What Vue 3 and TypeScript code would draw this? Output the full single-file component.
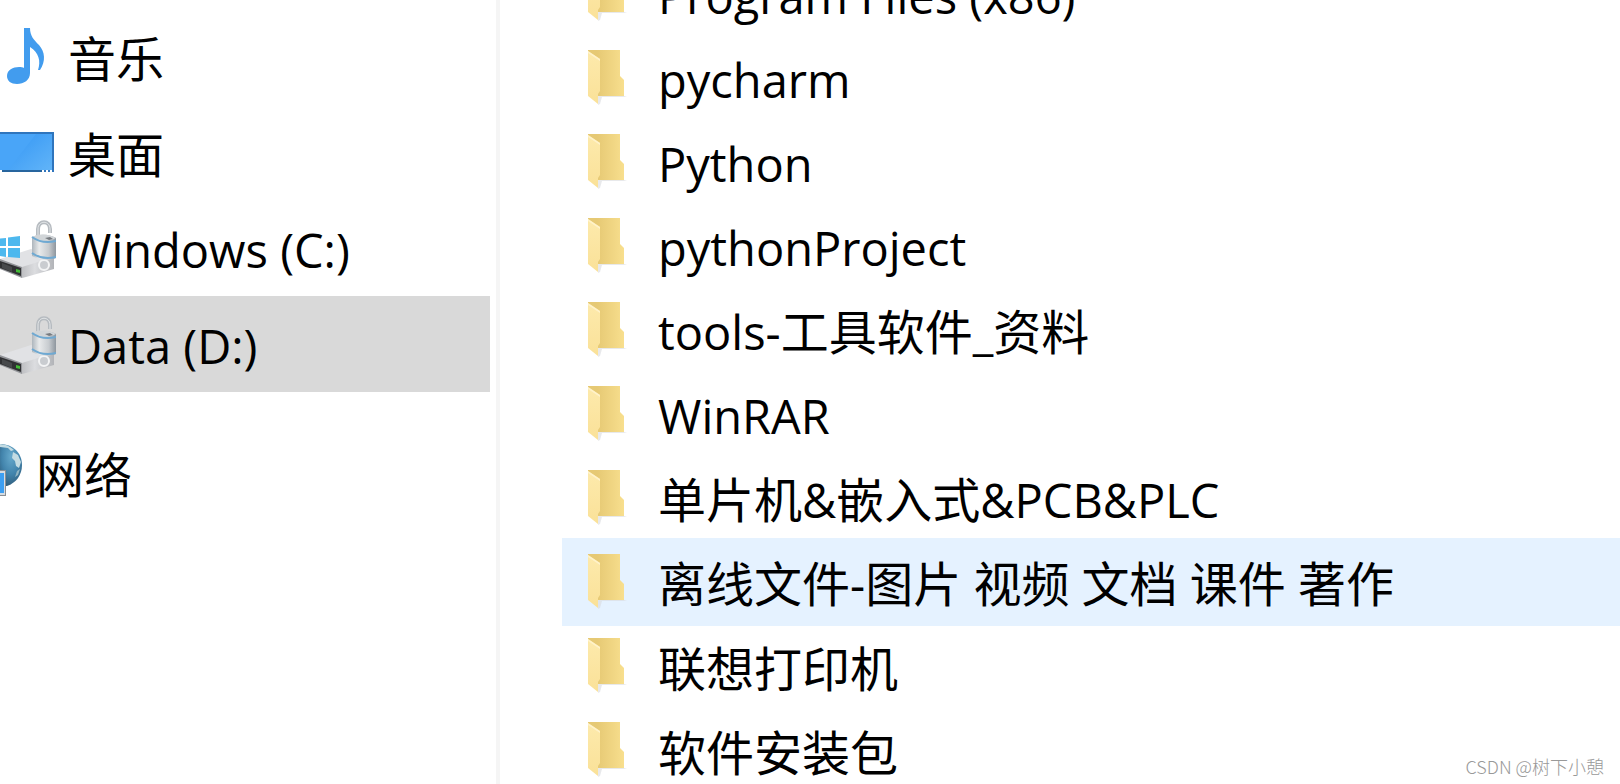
<script setup lang="ts">
type Place = { id: string; label: string; icon: 'music' | 'desktop' | 'drive' | 'network'; system?: boolean; current?: boolean; root?: boolean }
type Folder = { name: string; hovered?: boolean }
type Run = { text: string; latin: boolean }

const places: Place[] = [
  { id: 'music', label: '音乐', icon: 'music' },
  { id: 'desktop', label: '桌面', icon: 'desktop' },
  { id: 'c', label: 'Windows (C:)', icon: 'drive', system: true },
  { id: 'd', label: 'Data (D:)', icon: 'drive', current: true },
  { id: 'network', label: '网络', icon: 'network', root: true },
]

const folders: Folder[] = [
  { name: 'Program Files (x86)' },
  { name: 'pycharm' },
  { name: 'Python' },
  { name: 'pythonProject' },
  { name: 'tools-工具软件_资料' },
  { name: 'WinRAR' },
  { name: '单片机&嵌入式&PCB&PLC' },
  { name: '离线文件-图片 视频 文档 课件 著作', hovered: true },
  { name: '联想打印机' },
  { name: '软件安装包' },
]

// Splits a name into Latin and Chinese runs so that each takes its own type size.
function runs(name: string): Run[] {
  return (name.match(/[\x00-\x7f]+|[^\x00-\x7f]+/g) ?? []).map((text) => ({
    text,
    latin: text.charCodeAt(0) < 128,
  }))
}
</script>

<template>
  <div class="explorer">
    <nav class="sidebar" aria-label="导航窗格">
      <a
        v-for="p in places"
        :key="p.id"
        :href="'#' + p.id"
        class="place"
        :class="{ current: p.current, root: p.root }"
        :aria-current="p.current ? 'page' : undefined"
      >
        <svg v-if="p.icon === 'music'" class="place-icon" viewBox="0 0 56 60" aria-hidden="true">
          <path fill="#429cee" d="M24 2h6c0 8 4 12 9 17 6 7 7 16 1 25h-2c3-9 1-17-8-23v26c0 7-6 11-13 11-6 0-10-3-10-8 0-6 6-9 12-9 2 0 4 0 5 1z" />
        </svg>
        <svg v-else-if="p.icon === 'desktop'" class="place-icon" viewBox="0 0 56 60" aria-hidden="true">
          <defs>
            <linearGradient id="glass" x1="0" y1="0" x2="1" y2="1">
              <stop offset="0" stop-color="#3396f5" />
              <stop offset="1" stop-color="#61b4f8" />
            </linearGradient>
          </defs>
          <path fill="#2f75bd" d="M0 10h54v40H0z" />
          <path fill="#49a5f8" d="M0 12h52v36H0z" />
          <path fill="url(#glass)" d="M36 12h16v36H8z" />
          <path fill="#28659e" d="M0 48h42v2H0z" />
          <path fill="#fff" d="M0 48h2v2H0zM42 48h2v2h-2zM46 48h2v2h-2zM50 48h2v2h-2z" />
        </svg>
        <svg v-else-if="p.icon === 'drive'" class="place-icon" viewBox="0 0 56 60" aria-hidden="true">
          <defs>
            <linearGradient :id="'side-' + p.id" x1="0" y1="0" x2="1" y2="0">
              <stop offset="0" stop-color="#bfc0c3" />
              <stop offset=".4" stop-color="#dcdde0" />
              <stop offset="1" stop-color="#b2b4b8" />
            </linearGradient>
            <linearGradient :id="'lock-' + p.id" x1="0" y1="0" x2="1" y2="0">
              <stop offset="0" stop-color="#aeb6bd" />
              <stop offset=".3" stop-color="#e8eaeb" />
              <stop offset=".7" stop-color="#c7cbcf" />
              <stop offset="1" stop-color="#8e969e" />
            </linearGradient>
          </defs>
          <path fill="#e1e2e5" d="M0 41 31 31l23 9v4L22 53 0 43z" />
          <path :fill="'url(#side-' + p.id + ')'" d="m22 49 32-10v12L26 59l-4 1z" />
          <path fill="#939599" d="m0 41 22 8v11L0 51z" />
          <path fill="#303133" d="m0 43 21 7v8L0 50z" />
          <path fill="#6b6d70" d="m2 45 10 4v5L2 50z" opacity=".4" />
          <path fill="#42bb36" d="m16 51 4 1v3l-4-1z" />
          <g v-if="p.system" fill="#4db8ee">
            <path d="M0 20.500 6 20v8H0zM8 19.500 20 18v10H8zM0 30h6v9l-6-1zM8 30h12v10L8 39z" />
          </g>
          <path fill="none" stroke="#b6bbc0" stroke-width="4" d="M38 20V11c0-9 12-9 12 0v4" />
          <path fill="none" stroke="#e3e6e8" stroke-width="1" d="M38 20V11c0-9 12-9 12 0v4" />
          <circle cx="44" cy="47" r="5" fill="#c9ccd0" stroke="#f3f4f5" stroke-width="2" />
          <path :fill="'url(#lock-' + p.id + ')'" d="M32 19c8-4 17-3 24 1v20c-7 3-17 2-24-2z" />
          <path fill="#d1d5d8" d="M32 19c8-4 17-3 24 1-8 4-17 3-24-1z" />
          <path fill="none" stroke="#6fa9d2" stroke-width="2" d="M32 19c7 5 16 6 24 4M32 35c7 5 16 6 24 4" />
          <path fill="#777b80" d="m45 20 5-1 3 2-4 1z" />
        </svg>
        <svg v-else class="place-icon" viewBox="0 0 24 60" aria-hidden="true">
          <defs>
            <radialGradient id="ocean" cx=".5" cy=".3" r=".7">
              <stop offset="0" stop-color="#66a9cc" />
              <stop offset=".6" stop-color="#4284ac" />
              <stop offset="1" stop-color="#315f7e" />
            </radialGradient>
          </defs>
          <path fill="url(#ocean)" d="M0 2c13 0 22 9 22 21 0 10-6 18-15 21H0z" />
          <path fill="#c4dce3" d="M0 2c5 0 10 2 14 6l-3 1-3-3-8-1zM13 10l5 3 3 7-2 6-3-2-1-5-3-3z" />
          <path fill="#8fb3c1" d="m17 29 3-2-2 6-3 2z" />
          <path fill="#8b8f93" d="M0 28h6v26H0z" />
          <path fill="#d5dce2" d="M0 29h5v24H0z" />
          <path fill="#3d9ff2" d="M0 31h4v20H0z" />
        </svg>
        <span class="label"><span v-for="(r, i) in runs(p.label)" :key="i" :class="{ latin: r.latin }">{{ r.text }}</span></span>
      </a>
    </nav>

    <main class="content">
      <svg class="defs" aria-hidden="true">
        <defs>
          <linearGradient id="folder-back" x1="0" y1="0" x2="1" y2="0">
            <stop offset=".25" stop-color="#e6c974" />
            <stop offset="1" stop-color="#f8df8e" />
          </linearGradient>
          <linearGradient id="folder-front" x1="0" y1="0" x2="0" y2="1">
            <stop offset="0" stop-color="#fdeaac" />
            <stop offset="1" stop-color="#fae198" />
          </linearGradient>
        </defs>
      </svg>
      <ul class="folders">
        <li v-for="f in folders" :key="f.name">
          <button type="button" class="folder" :class="{ hovered: f.hovered }">
            <svg class="folder-icon" viewBox="0 0 40 56" aria-hidden="true">
              <path fill="#d9dadd" opacity=".6" d="M10 46h29l-3 1H14l-2 7-2 1z" />
              <path fill="url(#folder-back)" d="M0 0h32v26l4 4v16H0z" />
              <path fill="url(#folder-front)" d="m0 1 12 8v32l-2 3v10L0 46z" />
              <path fill="#fff2c9" d="m0 1 12 8v2L0 3z" />
            </svg>
            <span class="label"><span v-for="(r, i) in runs(f.name)" :key="i" :class="{ latin: r.latin }">{{ r.text }}</span></span>
          </button>
        </li>
      </ul>
    </main>
    <small class="credit">CSDN @树下小憩</small>
  </div>
</template>

<style>
body {
  margin: 0;
}
</style>

<style scoped>
.explorer {
  position: relative;
  display: flex;
  height: 100vh;
  overflow: hidden;
  background: #fff;
  color: #000;
  font-family: "Noto Sans CJK SC", sans-serif;
  font-size: 48px;
  line-height: 60px;
}
.sidebar {
  box-sizing: border-box;
  flex: 0 0 500px;
  padding: 8px 6px 0 0;
  border-right: 4px solid #f5f5f5;
}
.place {
  display: flex;
  align-items: center;
  gap: 12px;
  height: 96px;
  color: inherit;
  text-decoration: none;
}
.place.current {
  background: #d9d9d9;
}
.place.root {
  margin-top: 32px;
}
.place-icon {
  flex: none;
  width: 56px;
  height: 60px;
}
.root .place-icon {
  width: 24px;
}
.label {
  white-space: pre;
}
.latin {
  font-family: "Open Sans", "Noto Sans", sans-serif;
  font-size: 47px;
}
.content {
  flex: 1;
  min-width: 0;
  padding-left: 62px;
}
.defs {
  position: absolute;
  width: 0;
  height: 0;
}
.folders {
  margin: -50px 0 0;
  padding: 0;
  list-style: none;
}
.folders li {
  height: 84px;
}
.folder {
  display: flex;
  align-items: center;
  gap: 30px;
  width: 100%;
  height: 88px;
  padding: 0 0 0 26px;
  border: 0;
  background: transparent;
  color: inherit;
  font: inherit;
  text-align: left;
}
.folder.hovered {
  background: #e5f2ff;
}
.folder-icon {
  flex: none;
  width: 40px;
  height: 56px;
}
.credit {
  position: absolute;
  right: 16px;
  bottom: 6px;
  color: #999;
  font-family: "Noto Sans CJK SC", sans-serif;
  font-size: 18px;
  font-weight: 300;
  line-height: 24px;
}
</style>
